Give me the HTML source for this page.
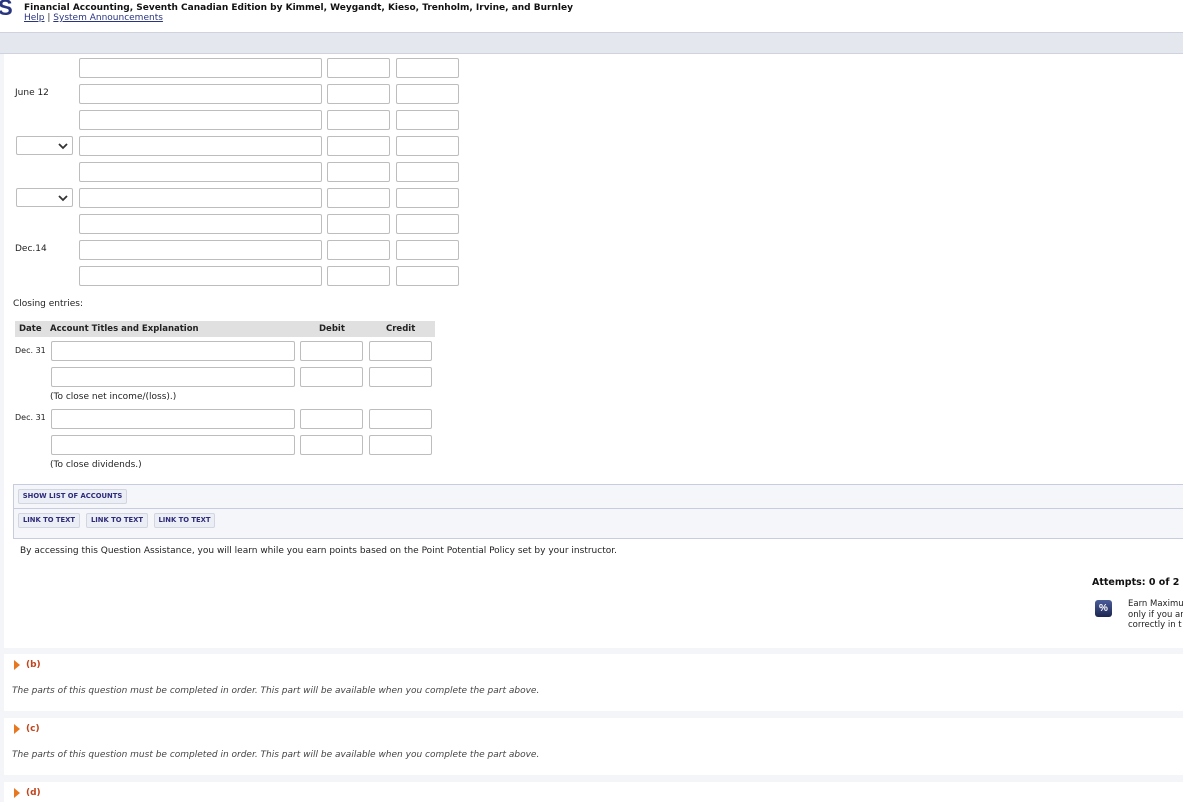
<!DOCTYPE html>
<html><head><meta charset="utf-8"><style>
*{box-sizing:border-box;margin:0;padding:0}
body{width:1183px;height:794px;overflow:hidden;background:#f4f5f9;font-family:Verdana,"DejaVu Sans","Liberation Sans",sans-serif;color:#222;position:relative}
.a{position:absolute}
.in{position:absolute;height:20px;border:1px solid #bdbdbd;border-radius:2px;background:#fff}
.t{font-size:9px;position:absolute;white-space:nowrap}
.btn{position:absolute;height:15px;border:1px solid #d3d5e0;border-radius:2px;background:#eceef5;font-size:6.8px;font-weight:bold;color:#2d2a7a;line-height:13px;text-align:center}
.sel{position:absolute;width:57px;height:19px;border:1px solid #bdbdbd;border-radius:2px;background:#fff}
.sel svg{position:absolute;right:4px;top:5px}
.it{font-style:italic;font-size:9px;color:#444}
.part{font-weight:bold;font-size:9px;color:#c0441b}
</style></head><body>
<div class="a" style="left:0;top:0;width:1183px;height:32px;background:#fff"></div>
<div class="a" style="left:-2px;top:-5px;font:bold 22px 'Liberation Sans',sans-serif;color:#2a3580">S</div>
<div class="t" style="left:24px;top:3px;font-weight:bold;font-size:9px;color:#111">Financial Accounting, Seventh Canadian Edition by Kimmel, Weygandt, Kieso, Trenholm, Irvine, and Burnley</div>
<div class="t" style="left:24px;top:13px;font-size:9px;color:#333"><span style="color:#2a3580;text-decoration:underline">Help</span> | <span style="color:#2a3580;text-decoration:underline">System Announcements</span></div>
<div class="a" style="left:0;top:32px;width:1183px;height:22px;background:#e4e7ee;border-top:1px solid #cfd3df;border-bottom:1px solid #cfd3df"></div>
<div class="a" style="left:4px;top:54px;width:1179px;height:594px;background:#fff"></div>

<div class="t" style="left:15px;top:88px">June 12</div>
<div class="t" style="left:15px;top:244px">Dec.14</div>
<div class="sel" style="left:16px;top:136px"><svg width="10" height="8" viewBox="0 0 10 8"><path d="M1 2l4 4 4-4" stroke="#333" stroke-width="1.8" fill="none"/></svg></div>
<div class="sel" style="left:16px;top:188px"><svg width="10" height="8" viewBox="0 0 10 8"><path d="M1 2l4 4 4-4" stroke="#333" stroke-width="1.8" fill="none"/></svg></div>

<div class="t" style="left:13px;top:299px">Closing entries:</div>
<div class="a" style="left:15px;top:321px;width:420px;height:16px;background:#e0e0e0"></div>
<div class="t" style="left:19px;top:324px;font-weight:bold;font-size:8.5px">Date</div>
<div class="t" style="left:50px;top:324px;font-weight:bold;font-size:8.5px">Account Titles and Explanation</div>
<div class="t" style="left:319px;top:324px;font-weight:bold;font-size:8.5px">Debit</div>
<div class="t" style="left:386px;top:324px;font-weight:bold;font-size:8.5px">Credit</div>
<div class="t" style="left:15px;top:346px;font-size:8px">Dec. 31</div>
<div class="t" style="left:15px;top:413px;font-size:8px">Dec. 31</div>
<div class="t" style="left:50px;top:392px;font-size:9px">(To close net income/(loss).)</div>
<div class="t" style="left:50px;top:460px;font-size:9px">(To close dividends.)</div>

<div class="a" style="left:13px;top:484px;width:1170px;height:55px;background:#f5f6fa;border:1px solid #c8cce0;border-right:none"></div>
<div class="a" style="left:14px;top:508px;width:1169px;height:1px;background:#c8cce0"></div>
<div class="btn" style="left:18px;top:489px;width:109px">SHOW LIST OF ACCOUNTS</div>
<div class="btn" style="left:18px;top:513px;width:62px">LINK TO TEXT</div>
<div class="btn" style="left:86px;top:513px;width:62px">LINK TO TEXT</div>
<div class="btn" style="left:154px;top:513px;width:61px">LINK TO TEXT</div>
<div class="t" style="left:20px;top:546px;font-size:9px">By accessing this Question Assistance, you will learn while you earn points based on the Point Potential Policy set by your instructor.</div>
<div class="t" style="left:1092px;top:577px;font-weight:bold;font-size:9.5px;color:#111">Attempts: 0 of 2 used</div>
<div class="a" style="left:1095px;top:600px;width:17px;height:17px;border-radius:3px;background:linear-gradient(#4a5d9a,#1c2550);color:#fff;font:bold 10px 'Liberation Sans',sans-serif;text-align:center;line-height:17px">%</div>
<div class="t" style="left:1128px;top:599px;font-size:8.5px;line-height:10.5px">Earn Maximum<br>only if you an<br>correctly in t</div>

<div class="a" style="left:4px;top:654px;width:1179px;height:57px;background:#fff"></div>
<div class="a" style="left:4px;top:718px;width:1179px;height:57px;background:#fff"></div>
<div class="a" style="left:4px;top:782px;width:1179px;height:20px;background:#fff"></div>
<svg class="a" style="left:14px;top:660px" width="6" height="10"><path d="M0 0L6 5L0 10Z" fill="#e8771f"/></svg>
<div class="t part" style="left:26px;top:660px">(b)</div>
<div class="t it" style="left:12px;top:686px">The parts of this question must be completed in order. This part will be available when you complete the part above.</div>
<svg class="a" style="left:14px;top:724px" width="6" height="10"><path d="M0 0L6 5L0 10Z" fill="#e8771f"/></svg>
<div class="t part" style="left:26px;top:724px">(c)</div>
<div class="t it" style="left:12px;top:750px">The parts of this question must be completed in order. This part will be available when you complete the part above.</div>
<svg class="a" style="left:14px;top:788px" width="6" height="10"><path d="M0 0L6 5L0 10Z" fill="#e8771f"/></svg>
<div class="t part" style="left:26px;top:788px">(d)</div>

<div class="in" style="left:79px;top:58px;width:243px"></div><div class="in" style="left:327px;top:58px;width:63px"></div><div class="in" style="left:396px;top:58px;width:63px"></div>
<div class="in" style="left:79px;top:84px;width:243px"></div><div class="in" style="left:327px;top:84px;width:63px"></div><div class="in" style="left:396px;top:84px;width:63px"></div>
<div class="in" style="left:79px;top:110px;width:243px"></div><div class="in" style="left:327px;top:110px;width:63px"></div><div class="in" style="left:396px;top:110px;width:63px"></div>
<div class="in" style="left:79px;top:136px;width:243px"></div><div class="in" style="left:327px;top:136px;width:63px"></div><div class="in" style="left:396px;top:136px;width:63px"></div>
<div class="in" style="left:79px;top:162px;width:243px"></div><div class="in" style="left:327px;top:162px;width:63px"></div><div class="in" style="left:396px;top:162px;width:63px"></div>
<div class="in" style="left:79px;top:188px;width:243px"></div><div class="in" style="left:327px;top:188px;width:63px"></div><div class="in" style="left:396px;top:188px;width:63px"></div>
<div class="in" style="left:79px;top:214px;width:243px"></div><div class="in" style="left:327px;top:214px;width:63px"></div><div class="in" style="left:396px;top:214px;width:63px"></div>
<div class="in" style="left:79px;top:240px;width:243px"></div><div class="in" style="left:327px;top:240px;width:63px"></div><div class="in" style="left:396px;top:240px;width:63px"></div>
<div class="in" style="left:79px;top:266px;width:243px"></div><div class="in" style="left:327px;top:266px;width:63px"></div><div class="in" style="left:396px;top:266px;width:63px"></div>

<div class="in" style="left:51px;top:341px;width:244px"></div><div class="in" style="left:300px;top:341px;width:63px"></div><div class="in" style="left:369px;top:341px;width:63px"></div>
<div class="in" style="left:51px;top:367px;width:244px"></div><div class="in" style="left:300px;top:367px;width:63px"></div><div class="in" style="left:369px;top:367px;width:63px"></div>
<div class="in" style="left:51px;top:409px;width:244px"></div><div class="in" style="left:300px;top:409px;width:63px"></div><div class="in" style="left:369px;top:409px;width:63px"></div>
<div class="in" style="left:51px;top:435px;width:244px"></div><div class="in" style="left:300px;top:435px;width:63px"></div><div class="in" style="left:369px;top:435px;width:63px"></div>
</body></html>
